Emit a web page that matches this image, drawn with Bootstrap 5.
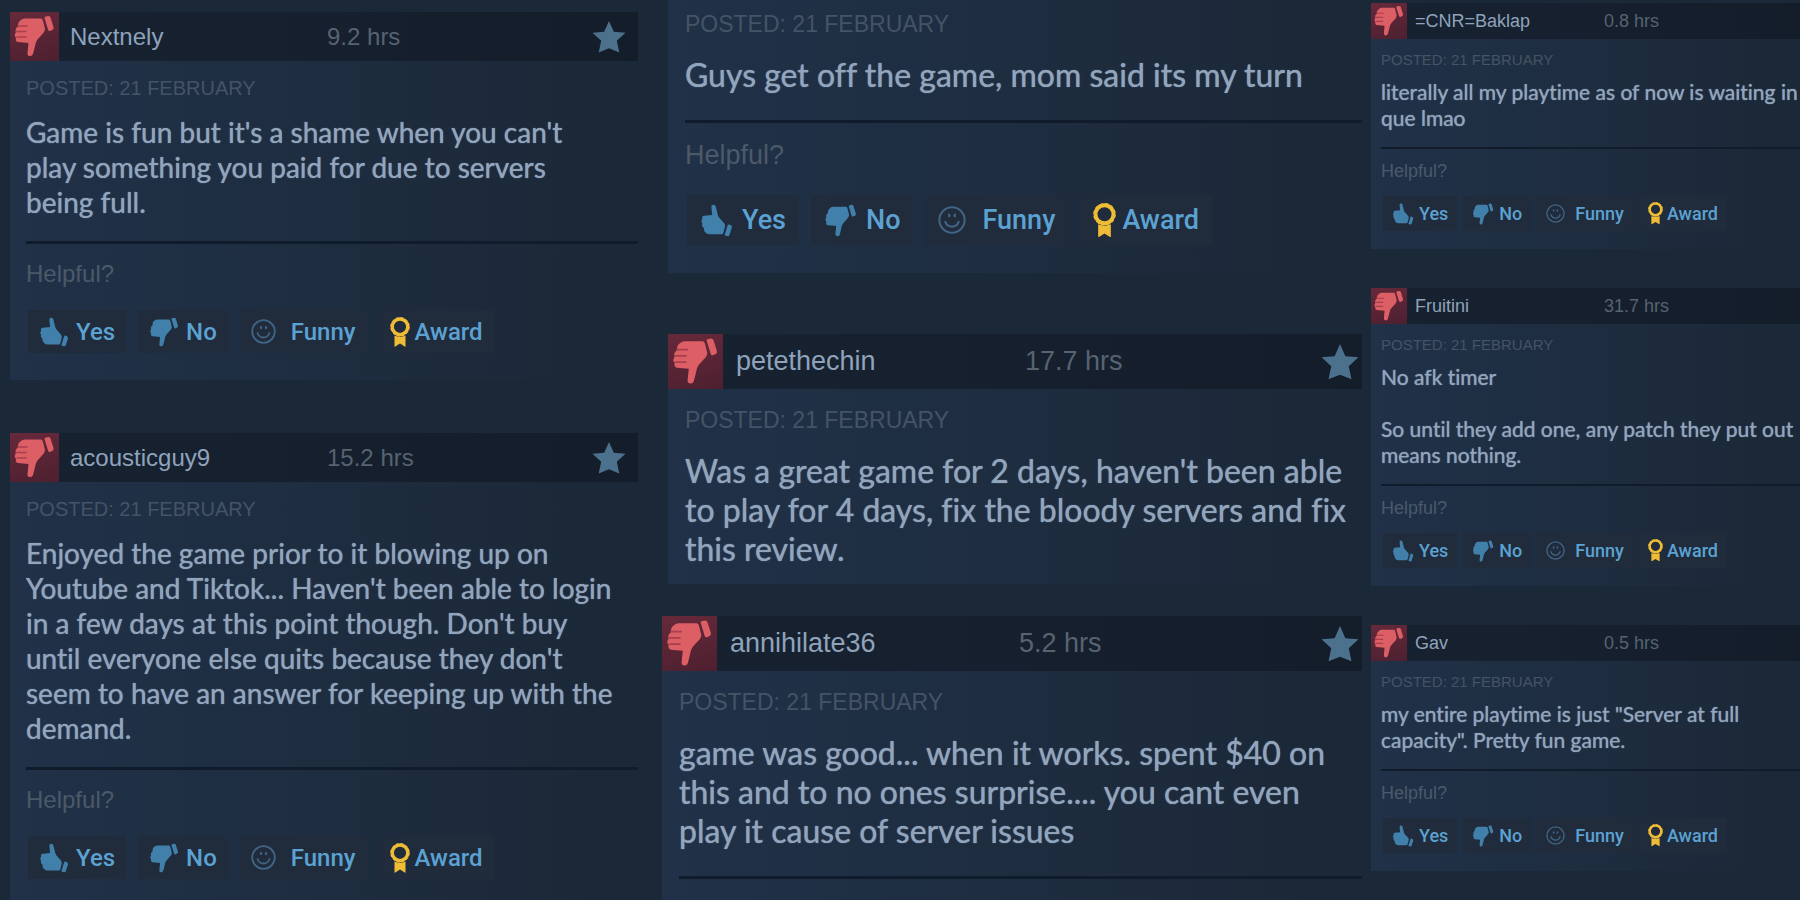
<!DOCTYPE html>
<html lang="en">
<head>
<meta charset="utf-8">
<meta name="viewport" content="width=device-width, initial-scale=1">
<title>Player reviews</title>
<link href="https://cdn.jsdelivr.net/npm/bootstrap@5.3.0/dist/css/bootstrap.min.css" rel="stylesheet">
<style>
body { background: #1b2838; font-family: "Liberation Sans", Arial, sans-serif; }
.wall {
  display: grid;
  grid-template-columns: 652fr 709fr 429fr;
  min-height: 100vh;
  padding-left: 10px;
  overflow-x: hidden;
}

/* Three text scales, one for each column */
.size-m {
  --fs: 24px; --meta: 20px; --copy: 28px; --copy-lh: 35px;
  --head: 49px; --name-w: 268px; --name-pad: 11px; --star: 34px; --star-pad: 12px;
  --pad: 16px; --meta-top: 15px; --meta-lh: 24px; --copy-top: 15px; --rule-top: 21px; --rule: 3px;
  --help-top: 16px; --help-lh: 28px; --btn-top: 22px; --btn-h: 43px; --btn-gap: 12px; --btn-pad: 11px;
  --hand: 30px; --hand-gap: 7px; --smile: 25px; --smile-gap: 15px; --medal: 20px; --medal-gap: 5px; --end: 27px;
  margin-right: 24px; padding-top: 12px; gap: 53px;
}
.size-l {
  --fs: 27px; --meta: 23px; --copy: 32px; --copy-lh: 39px;
  --head: 55px; --name-w: 302px; --name-pad: 13px; --star: 38px; --star-pad: 3px;
  --pad: 17px; --meta-top: 17px; --meta-lh: 28px; --copy-top: 17px; --rule-top: 26px; --rule: 3px;
  --help-top: 17px; --help-lh: 30px; --btn-top: 25px; --btn-h: 50px; --btn-gap: 12px; --btn-pad: 13px;
  --hand: 33px; --hand-gap: 9px; --smile: 28px; --smile-gap: 16px; --medal: 23px; --medal-gap: 6px; --end: 28px;
  margin-right: 9px;
}
.size-s {
  --fs: 18px; --meta: 15px; --copy: 21px; --copy-lh: 26px;
  --head: 36px; --name-w: 197px; --name-pad: 8px;
  --pad: 10px; --meta-top: 11px; --meta-lh: 20px; --copy-top: 9px; --rule-top: 16px; --rule: 2px;
  --help-top: 12px; --help-lh: 20px; --btn-top: 15px; --btn-h: 35px; --btn-gap: 6px; --btn-pad: 9px;
  --hand: 22px; --hand-gap: 5px; --smile: 19px; --smile-gap: 10px; --medal: 15px; --medal-gap: 4px; --end: 18px;
  padding-top: 3px; gap: 39px;
}

.review { background: linear-gradient(90deg, #203148, #1e2d40 45%, #1b2838 92%); font-size: var(--fs); }
.review-head { height: var(--head); background: linear-gradient(90deg, #172231, #141d2a); }
.verdict { width: var(--head); height: var(--head); background: linear-gradient(165deg, #66293a, #4d2030); color: #dd5f66; }
.verdict svg { width: 100%; height: 100%; }
.who { width: var(--name-w); padding-left: var(--name-pad); color: #8fa3bb; text-decoration: none; }
.hours { color: #566371; }
.star { width: var(--star); height: var(--star); margin-right: var(--star-pad); fill: #4c718d; }
.review-body { padding-left: var(--pad); }
.posted { padding-top: var(--meta-top); font-size: var(--meta); line-height: var(--meta-lh); color: #455365; }
.copy {
  padding-top: var(--copy-top);
  font: 400 var(--copy)/var(--copy-lh) Lato, "Noto Sans", sans-serif;
  font-variant-ligatures: none;
  color: #91a5bc;
  text-shadow: 0 0 1px #91a5bc;
  white-space: nowrap;
}
.rule { height: var(--rule); margin-top: var(--rule-top); background: #101c2b; }
.helpful { padding-top: var(--help-top); line-height: var(--help-lh); color: #4b5969; }
.votes { margin: var(--btn-top) 0 0 2px; padding-bottom: var(--end); gap: var(--btn-gap); }
.vote {
  height: var(--btn-h);
  padding: 0 var(--btn-pad);
  border: 0;
  background: #202b3c;
  color: #5ba2d2;
  font: 500 var(--fs)/1 Roboto, "Liberation Sans", sans-serif;
}
.hand { width: var(--hand); height: var(--hand); margin-right: var(--hand-gap); color: #4080aa; }
.hand-up { transform: scaleY(-1); }
.smile { width: var(--smile); height: var(--smile); margin-right: var(--smile-gap); color: #426484; }
.medal { width: var(--medal); height: calc(var(--medal) * 1.5); margin-right: var(--medal-gap); color: #eebc35; }
.inset { margin-left: 6px; }
.first { padding-top: 10px; margin-bottom: 61px; }
.first .posted { padding-top: 0; }
.short { margin-bottom: 32px; }
.last { --end: 0px; }
</style>
</head>
<body>
<svg class="d-none" aria-hidden="true">
  <symbol id="hand" viewBox="3 3 42 42">
    <path fill="currentColor" d="M11 8Q12 6.500 15 6.500L31 6.500Q32.500 6.500 33 9L35 17Q35 20 31.500 23L27.500 27.500Q25.500 30 25 34L23 42Q22 44.500 19.500 44Q17 43.500 17.500 41L18.500 31L8 30Q5 29.500 6 25.500Q3.500 24 6 20Q4.500 17 8 14.500Q7.500 10 11 8Z"/>
    <path fill="currentColor" d="M34.500 6Q34 4.800 36 4.500L38.500 4Q40 4 40.500 5.500L43.500 15Q44 17 42.500 17.800L40 19Q38.500 19.300 38 17.500Z"/>
  </symbol>
  <symbol id="verdict" viewBox="0 0 49 49">
    <use href="#hand" x="3" y="3" width="42" height="42"/>
    <path d="M8 14H17M6 19.500H16M7 25H16" fill="none" stroke="#a83f4c" stroke-width="1.500" stroke-linecap="round"/>
  </symbol>
  <symbol id="star" viewBox="0 0 34 34"><path d="M17 1L21.800 11.800L33.500 12.800L24.800 20.700L27.300 32.500L17 28.300L6.700 32.500L9.200 20.700L.5 12.800L12.200 11.800Z"/></symbol>
  <symbol id="smile" viewBox="0 0 25 25">
    <circle cx="12.500" cy="12.500" r="11.300" fill="none" stroke="currentColor" stroke-width="1.800"/>
    <path d="M6.500 14Q8 18.500 12.500 18.500T18.500 14" fill="none" stroke="currentColor" stroke-width="1.800" stroke-linecap="round"/>
    <ellipse cx="10" cy="8.500" rx="1.100" ry="1.700" fill="currentColor"/><ellipse cx="15" cy="8.500" rx="1.100" ry="1.700" fill="currentColor"/>
  </symbol>
  <symbol id="medal" viewBox="0 0 20 30">
    <circle cx="10" cy="9.800" r="7.800" fill="none" stroke="currentColor" stroke-width="3.400"/>
    <circle cx="10" cy="9.800" r="9.300" fill="none" stroke="currentColor" stroke-width="1" stroke-dasharray="2.900 2"/>
    <path fill="currentColor" d="M4.500 18.500Q10 21 15.500 18.500V30L10 26.500L4.500 30Z"/>
  </symbol>
</svg>

<template id="votes">
  <div class="helpful">Helpful?</div>
  <div class="votes d-flex">
    <button type="button" class="vote d-flex align-items-center"><svg class="hand hand-up"><use href="#hand"/></svg>Yes</button>
    <button type="button" class="vote d-flex align-items-center"><svg class="hand"><use href="#hand"/></svg>No</button>
    <button type="button" class="vote d-flex align-items-center"><svg class="smile"><use href="#smile"/></svg>Funny</button>
    <button type="button" class="vote d-flex align-items-center"><svg class="medal"><use href="#medal"/></svg>Award</button>
  </div>
</template>

<main class="wall">
  <section class="size-m d-flex flex-column">
    <article class="review">
      <header class="review-head d-flex align-items-center">
        <span class="verdict"><svg class="d-block"><use href="#verdict"/></svg></span>
        <a class="who" href="#">Nextnely</a><span class="hours">9.2 hrs</span>
        <svg class="star ms-auto"><use href="#star"/></svg>
      </header>
      <div class="review-body">
        <div class="posted">POSTED: 21 FEBRUARY</div>
        <div class="copy">Game is fun but it's a shame when you can't<br>play something you paid for due to servers<br>being full.</div>
        <div class="rule"></div>
        <div data-votes></div>
      </div>
    </article>
    <article class="review last flex-fill">
      <header class="review-head d-flex align-items-center">
        <span class="verdict"><svg class="d-block"><use href="#verdict"/></svg></span>
        <a class="who" href="#">acousticguy9</a><span class="hours">15.2 hrs</span>
        <svg class="star ms-auto"><use href="#star"/></svg>
      </header>
      <div class="review-body">
        <div class="posted">POSTED: 21 FEBRUARY</div>
        <div class="copy">Enjoyed the game prior to it blowing up on<br>Youtube and Tiktok... Haven't been able to login<br>in a few days at this point though. Don't buy<br>until everyone else quits because they don't<br>seem to have an answer for keeping up with the<br>demand.</div>
        <div class="rule"></div>
        <div data-votes></div>
      </div>
    </article>
  </section>

  <section class="size-l d-flex flex-column">
    <article class="review first inset">
      <div class="review-body">
        <div class="posted">POSTED: 21 FEBRUARY</div>
        <div class="copy">Guys get off the game, mom said its my turn</div>
        <div class="rule"></div>
        <div data-votes></div>
      </div>
    </article>
    <article class="review short inset">
      <header class="review-head d-flex align-items-center">
        <span class="verdict"><svg class="d-block"><use href="#verdict"/></svg></span>
        <a class="who" href="#">petethechin</a><span class="hours">17.7 hrs</span>
        <svg class="star ms-auto"><use href="#star"/></svg>
      </header>
      <div class="review-body pb-3">
        <div class="posted">POSTED: 21 FEBRUARY</div>
        <div class="copy">Was a great game for 2 days, haven't been able<br>to play for 4 days, fix the bloody servers and fix<br>this review.</div>
      </div>
    </article>
    <article class="review flex-fill">
      <header class="review-head d-flex align-items-center">
        <span class="verdict"><svg class="d-block"><use href="#verdict"/></svg></span>
        <a class="who" href="#">annihilate36</a><span class="hours">5.2 hrs</span>
        <svg class="star ms-auto"><use href="#star"/></svg>
      </header>
      <div class="review-body">
        <div class="posted">POSTED: 21 FEBRUARY</div>
        <div class="copy">game was good... when it works. spent $40 on<br>this and to no ones surprise.... you cant even<br>play it cause of server issues</div>
        <div class="rule"></div>
      </div>
    </article>
  </section>

  <section class="size-s d-flex flex-column">
    <article class="review">
      <header class="review-head d-flex align-items-center">
        <span class="verdict"><svg class="d-block"><use href="#verdict"/></svg></span>
        <a class="who" href="#">=CNR=Baklap</a><span class="hours">0.8 hrs</span>
      </header>
      <div class="review-body">
        <div class="posted">POSTED: 21 FEBRUARY</div>
        <div class="copy">literally all my playtime as of now is waiting in<br>que lmao</div>
        <div class="rule"></div>
        <div data-votes></div>
      </div>
    </article>
    <article class="review">
      <header class="review-head d-flex align-items-center">
        <span class="verdict"><svg class="d-block"><use href="#verdict"/></svg></span>
        <a class="who" href="#">Fruitini</a><span class="hours">31.7 hrs</span>
      </header>
      <div class="review-body">
        <div class="posted">POSTED: 21 FEBRUARY</div>
        <div class="copy">No afk timer<br><br>So until they add one, any patch they put out<br>means nothing.</div>
        <div class="rule"></div>
        <div data-votes></div>
      </div>
    </article>
    <article class="review">
      <header class="review-head d-flex align-items-center">
        <span class="verdict"><svg class="d-block"><use href="#verdict"/></svg></span>
        <a class="who" href="#">Gav</a><span class="hours">0.5 hrs</span>
      </header>
      <div class="review-body">
        <div class="posted">POSTED: 21 FEBRUARY</div>
        <div class="copy">my entire playtime is just "Server at full<br>capacity". Pretty fun game.</div>
        <div class="rule"></div>
        <div data-votes></div>
      </div>
    </article>
  </section>
</main>
<script src="https://cdn.jsdelivr.net/npm/bootstrap@5.3.0/dist/js/bootstrap.bundle.min.js"></script>
<script>
document.querySelectorAll('[data-votes]').forEach(function (slot) {
  slot.appendChild(document.getElementById('votes').content.cloneNode(true));
});
</script>
</body>
</html>
